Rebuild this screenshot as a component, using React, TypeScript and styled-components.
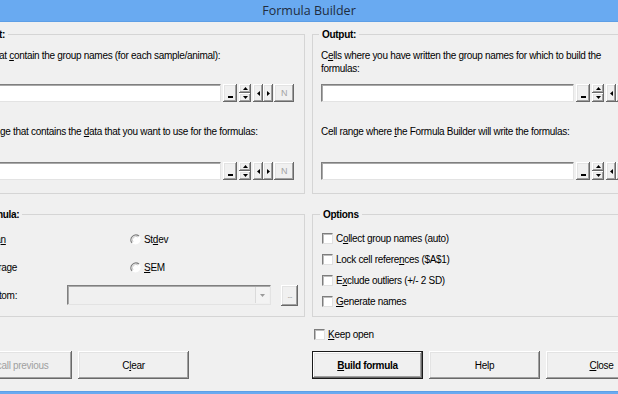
import React from 'react';
import styled, { createGlobalStyle, css } from 'styled-components';

const GlobalStyle = createGlobalStyle`
  html, body {
    margin: 0;
    padding: 0;
    background: #f0f0f0;
    overflow: hidden;
  }
  body {
    font-family: "Liberation Sans", Arial, sans-serif;
    font-size: 10px;
    letter-spacing: -0.3px;
    color: #000;
  }
  * { box-sizing: border-box; }
`;

const raised = css`
  background: #f0f0f0;
  box-shadow: inset -1px -1px #696969, inset 1px 1px #ffffff, inset -2px -2px #a0a0a0, inset 2px 2px #e3e3e3;
`;

const sunken = css`
  border: 1px solid;
  border-color: #7f7f7f #e3e3e3 #e3e3e3 #7f7f7f;
  box-shadow: inset 1px 1px #a9a9a9;
`;

const Window = styled.div`
  width: 618px;
  height: 394px;
  display: flex;
  flex-direction: column;
  overflow: hidden;
  background: #f0f0f0;
`;

const TitleBar = styled.div`
  height: 22px;
  flex: none;
  display: flex;
  align-items: center;
  justify-content: center;
  background: #69aaf1;
  border-bottom: 1px solid #5e9fe6;
  font-family: "Open Sans", "Noto Sans", sans-serif;
  font-size: 12.5px;
  letter-spacing: 0;
  color: #1f2d3f;
`;

const Client = styled.div`
  flex: 1;
  overflow: hidden;
`;

const BottomEdge = styled.div`
  height: 3px;
  flex: none;
  background: #69aaf1;
  border-top: 1px solid #5e9fe6;
`;

const Layout = styled.div`
  width: 699px;
  margin-left: -41px;
  padding-top: 6px;
  display: grid;
  grid-template-columns: 346px 346px;
  column-gap: 7px;
`;

const Group = styled.fieldset<{ $pad: string; $mt?: number }>`
  margin: ${p => p.$mt ?? 0}px 0 0;
  min-width: 0;
  padding: ${p => p.$pad};
  border: 1px solid #d5d5d5;
`;

const Legend = styled.legend<{ $indent?: number }>`
  margin-left: ${p => p.$indent ?? -2}px;
  padding: 0 3px;
  font-weight: bold;
  line-height: 13px;
`;

const Field = styled.div<{ $top: number }>`
  margin-top: ${p => p.$top}px;
`;

const FieldLabel = styled.div`
  width: 305px;
  height: 26px;
  line-height: 13px;
`;

const InputRow = styled.div<{ $top: number }>`
  display: flex;
  align-items: flex-start;
  margin-top: ${p => p.$top}px;
  height: 18px;
`;

const TextBox = styled.div`
  flex: 1;
  height: 18px;
  background: #fff;
  ${sunken};
`;

const MiniButton = styled.div<{ $w: number; $gap: number }>`
  ${raised};
  flex: none;
  width: ${p => p.$w}px;
  height: 18px;
  margin-left: ${p => p.$gap}px;
  display: flex;
  align-items: center;
  justify-content: center;
  font-size: 9px;
  color: #a3a3a3;
`;

const Bar = styled.span`
  width: 5px;
  height: 2px;
  margin-top: 8px;
  background: #000;
`;

const Spin = styled.div`
  flex: none;
  width: 12px;
  height: 18px;
  margin-left: 2px;
  display: flex;
  flex-direction: column;
`;

const SpinHalf = styled.div`
  ${raised};
  height: 9px;
  display: flex;
  align-items: center;
  justify-content: center;
`;

const Tri = ({ dir, color = '#000' }: { dir: 'up' | 'down' | 'left' | 'right'; color?: string }) => {
  const pts = {
    up: '0,3 2.5,0 5,3',
    down: '0,0 5,0 2.5,3',
    left: '3,0 3,5 0,2.5',
    right: '0,0 0,5 3,2.5',
  }[dir];
  const vertical = dir === 'up' || dir === 'down';
  return (
    <svg width={vertical ? 5 : 3} height={vertical ? 3 : 5} viewBox={vertical ? '0 0 5 3' : '0 0 3 5'}>
      <polygon points={pts} fill={color} />
    </svg>
  );
};

const RangeInput = ({ top }: { top: number }) => (
  <InputRow $top={top}>
    <TextBox />
    <MiniButton $w={14} $gap={2}><Bar /></MiniButton>
    <Spin>
      <SpinHalf><Tri dir="up" /></SpinHalf>
      <SpinHalf><Tri dir="down" /></SpinHalf>
    </Spin>
    <MiniButton $w={10} $gap={2}><Tri dir="left" /></MiniButton>
    <MiniButton $w={10} $gap={0}><Tri dir="right" /></MiniButton>
    <MiniButton $w={20} $gap={1}>N</MiniButton>
  </InputRow>
);

const RadioGrid = styled.div`
  display: grid;
  grid-template-columns: 162px 1fr;
  grid-auto-rows: 20px;
  row-gap: 8px;
`;

const Choice = styled.label`
  display: flex;
  align-items: center;
  gap: 3px;
  white-space: nowrap;
`;

const RadioMark = () => (
  <svg width="11" height="11" viewBox="0 0 11 11">
    <circle cx="5.5" cy="5.5" r="5" fill="#fff" />
    <path d="M2 9 A5 5 0 0 1 9 2" fill="none" stroke="#7a7a7a" strokeWidth="1.1" />
    <path d="M3 8 A3.6 3.6 0 0 1 8 3" fill="none" stroke="#c4c4c4" strokeWidth="0.9" />
  </svg>
);

const CustomRow = styled.div`
  grid-column: 1 / -1;
  display: flex;
  align-items: center;
`;

const CustomLabel = styled(Choice)`
  width: 99px;
`;

const Combo = styled.div`
  width: 204px;
  height: 20px;
  display: flex;
  justify-content: flex-end;
  background: #f0f0f0;
  ${sunken};
`;

const ComboArrow = styled.div`
  width: 14px;
  height: 16px;
  margin: 1px;
  display: flex;
  align-items: center;
  justify-content: center;
  border-left: 1px solid #dadada;
  background: #f3f3f3;
`;

const DotsButton = styled.div`
  ${raised};
  width: 17px;
  height: 21px;
  margin-left: 10px;
  display: flex;
  align-items: center;
  justify-content: center;
  color: #a8a8a8;
  font-size: 9px;
  letter-spacing: -1px;
`;

const CheckList = styled.div`
  display: flex;
  flex-direction: column;
`;

const CheckRow = styled.label<{ $h: number }>`
  height: ${p => p.$h}px;
  display: flex;
  align-items: center;
  gap: 3px;
  white-space: nowrap;
`;

const Box = styled.span`
  width: 11px;
  height: 11px;
  flex: none;
  background: #fff;
  border: 1px solid;
  border-color: #7d7d7d #e0e0e0 #e0e0e0 #7d7d7d;
  box-shadow: inset 1px 1px #bdbdbd;
`;

const Footer = styled.div`
  margin-top: 11px;
  display: flex;
  flex-direction: column;
  justify-content: flex-end;
`;

const KeepOpen = styled(CheckRow)`
  margin-left: 2px;
  margin-bottom: 11px;
`;

const ButtonRow = styled.div<{ $indent: number }>`
  display: flex;
  gap: 6px;
  margin-left: ${p => p.$indent}px;
`;

const PushButton = styled.button<{ $default?: boolean }>`
  appearance: none;
  border: none;
  padding: 0;
  width: 111px;
  height: 28px;
  flex: none;
  font: inherit;
  font-size: 10px;
  letter-spacing: -0.3px;
  color: ${p => (p.disabled ? '#a0a0a0' : '#000')};
  font-weight: ${p => (p.$default ? 'bold' : 'normal')};
  ${raised};
  ${p =>
    p.$default &&
    css`
      box-shadow: inset 0 0 0 1px #1a1a1a, inset -2px -2px #696969, inset 2px 2px #ffffff,
        inset -3px -3px #a0a0a0, inset 3px 3px #e3e3e3;
    `}
`;

export default function App() {
  return (
    <>
      <GlobalStyle />
      <Window>
        <TitleBar>Formula Builder</TitleBar>
        <Client>
          <Layout>
            <Group $pad="8px 10px 13px 8px">
              <Legend $indent={8}>Input:</Legend>
              <Field $top={0}>
                <FieldLabel>Cells that <u>c</u>ontain the group names (for each sample/animal):</FieldLabel>
                <RangeInput top={9} />
              </Field>
              <Field $top={23}>
                <FieldLabel>Cell range that contains the <u>d</u>ata that you want to use for the formulas:</FieldLabel>
                <RangeInput top={11} />
              </Field>
            </Group>

            <Group $pad="8px 10px 13px 8px">
              <Legend>Output:</Legend>
              <Field $top={0}>
                <FieldLabel>
                  C<u>e</u>lls where you have written the group names for which to build the formulas:
                </FieldLabel>
                <RangeInput top={9} />
              </Field>
              <Field $top={23}>
                <FieldLabel>Cell range where <u>t</u>he Formula Builder will write the formulas:</FieldLabel>
                <RangeInput top={11} />
              </Field>
            </Group>

            <Group $pad="8px 6px 11px 8px" $mt={14}>
              <Legend $indent={8}>Formula:</Legend>
              <RadioGrid>
                <Choice><RadioMark /><span>Mea<u>n</u></span></Choice>
                <Choice><RadioMark /><span>St<u>d</u>ev</span></Choice>
                <Choice><RadioMark /><span>Average</span></Choice>
                <Choice><RadioMark /><span><u>S</u>EM</span></Choice>
                <CustomRow>
                  <CustomLabel><RadioMark /><span>Custom:</span></CustomLabel>
                  <Combo>
                    <ComboArrow><Tri dir="down" color="#9a9a9a" /></ComboArrow>
                  </Combo>
                  <DotsButton>...</DotsButton>
                </CustomRow>
              </RadioGrid>
            </Group>

            <Group $pad="7px 10px 3px 9px" $mt={14}>
              <Legend>Options</Legend>
              <CheckList>
                <CheckRow $h={21}><Box /><span>C<u>o</u>llect group names (auto)</span></CheckRow>
                <CheckRow $h={21}><Box /><span>Lock cell refere<u>n</u>ces ($A$1)</span></CheckRow>
                <CheckRow $h={21}><Box /><span>E<u>x</u>clude outliers (+/- 2 SD)</span></CheckRow>
                <CheckRow $h={21}><Box /><span><u>G</u>enerate names</span></CheckRow>
              </CheckList>
            </Group>

            <Footer>
              <ButtonRow $indent={2}>
                <PushButton disabled>Recall previous</PushButton>
                <PushButton>C<u>l</u>ear</PushButton>
              </ButtonRow>
            </Footer>

            <Footer>
              <KeepOpen $h={12}><Box /><span><u>K</u>eep open</span></KeepOpen>
              <ButtonRow $indent={0}>
                <PushButton $default><u>B</u>uild formula</PushButton>
                <PushButton>Help</PushButton>
                <PushButton><u>C</u>lose</PushButton>
              </ButtonRow>
            </Footer>
          </Layout>
        </Client>
        <BottomEdge />
      </Window>
    </>
  );
}
